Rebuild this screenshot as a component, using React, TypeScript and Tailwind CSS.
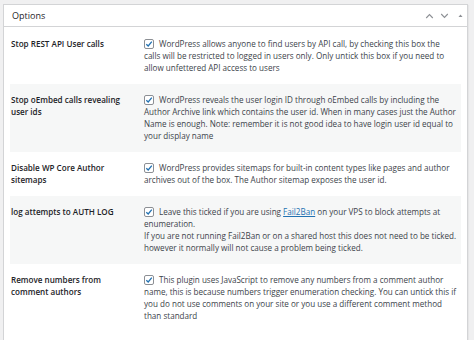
import React from "react";

type Row = { label: string[]; lines: React.ReactNode[]; gray: boolean };

const rows: Row[] = [
  {
    label: ["Stop REST API User calls"],
    gray: false,
    lines: [
      "WordPress allows anyone to find users by API call, by checking this box the",
      "calls will be restricted to logged in users only. Only untick this box if you need to",
      "allow unfettered API access to users",
    ],
  },
  {
    label: ["Stop oEmbed calls revealing", "user ids"],
    gray: true,
    lines: [
      "WordPress reveals the user login ID through oEmbed calls by including the",
      "Author Archive link which contains the user id. When in many cases just the Author",
      "Name is enough. Note: remember it is not good idea to have login user id equal to",
      "your display name",
    ],
  },
  {
    label: ["Disable WP Core Author", "sitemaps"],
    gray: false,
    lines: [
      "WordPress provides sitemaps for built-in content types like pages and author",
      "archives out of the box. The Author sitemap exposes the user id.",
    ],
  },
  {
    label: ["log attempts to AUTH LOG"],
    gray: true,
    lines: [
      <>
        Leave this ticked if you are using{" "}
        <span className="underline text-[#2271b1]">Fail2Ban</span> on your VPS to block attempts at
      </>,
      "enumeration.",
      "If you are not running Fail2Ban or on a shared host this does not need to be ticked.",
      "however it normally will not cause a problem being ticked.",
    ],
  },
  {
    label: ["Remove numbers from", "comment authors"],
    gray: false,
    lines: [
      "This plugin uses JavaScript to remove any numbers from a comment author",
      "name, this is because numbers trigger enumeration checking. You can untick this if",
      "you do not use comments on your site or you use a different comment method",
      "than standard",
    ],
  },
];

function Check() {
  return (
    <span className="inline-flex items-center justify-center w-[10px] h-[10px] border border-[#8c8f94] rounded-[2px] bg-white mr-[5px] align-[-1px]">
      <svg width="8" height="8" viewBox="0 0 8 8">
        <path d="M1.3 4.2 L3.2 6 L6.8 1.6" fill="none" stroke="#2271b1" strokeWidth="1.3" />
      </svg>
    </span>
  );
}

export default function App() {
  return (
    <div
      className="w-[474px] h-[340px] bg-[#f0f0f1] pt-[4px] pl-[3px]"
      style={{ fontFamily: '"Open Sans", "Noto Sans", sans-serif' }}
    >
      <div className="w-[465px] bg-white border border-[#d3d4d6] shadow-[1px_1px_1px_rgba(0,0,0,0.04)]">
        <div className="h-[22px] flex items-center justify-between border-b border-[#d3d4d6] pl-[8px] pr-[3px]">
          <span className="text-[9px] text-[#1d2327]">Options</span>
          <div className="flex items-center">
            <svg width="9" height="6" viewBox="0 0 9 6">
              <path d="M1.2 5 L4.5 1.6 L7.8 5" fill="none" stroke="#8c8f94" strokeWidth="1.1" />
            </svg>
            <svg width="9" height="6" viewBox="0 0 9 6" className="ml-[6px]">
              <path d="M1.2 1 L4.5 4.4 L7.8 1" fill="none" stroke="#8c8f94" strokeWidth="1.1" />
            </svg>
            <svg width="7" height="6" viewBox="0 0 7 6" className="ml-[8px]">
              <path d="M1.5 4 L3.5 1.5 L5.5 4 Z" fill="#8c8f94" />
            </svg>
          </div>
        </div>
        <div className="px-[6px] pt-[1px] pb-[8px]">
          {rows.map((r, i) => (
            <div
              key={i}
              className={`flex py-[10px] ${r.gray ? "bg-[#f6f7f7]" : "bg-white"}`}
            >
              <div className="w-[134px] shrink-0 pl-[1px] text-[8.1px] leading-[12px] font-semibold text-[#1d2327]">
                {r.label.map((l, j) => (
                  <div key={j}>{l}</div>
                ))}
              </div>
              <div className="flex-1 text-[8.1px] leading-[12px] text-[#3c434a] whitespace-nowrap">
                {r.lines.map((l, j) => (
                  <div key={j}>
                    {j === 0 && <Check />}
                    {l}
                  </div>
                ))}
              </div>
            </div>
          ))}
        </div>
      </div>
    </div>
  );
}
